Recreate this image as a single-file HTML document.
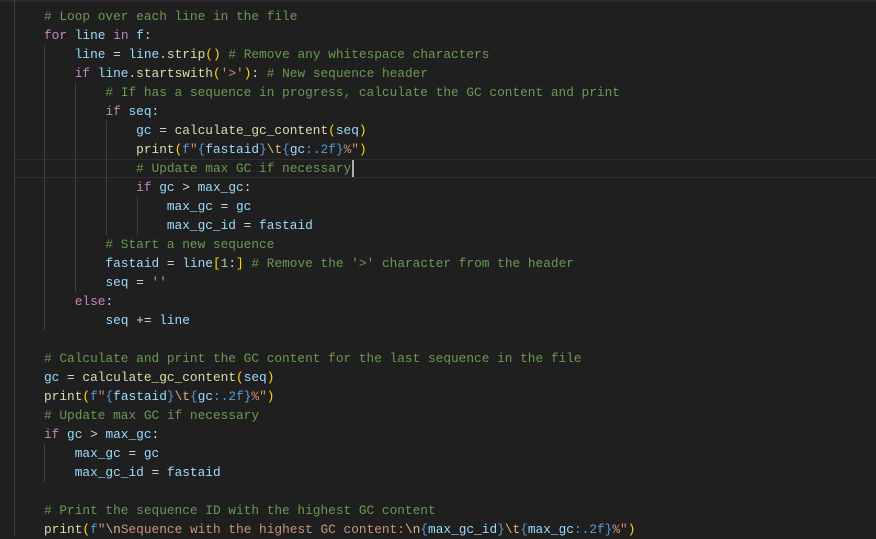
<!DOCTYPE html>
<html><head><meta charset="utf-8"><style>
body{margin:0;width:876px;height:535px;background:#1f1f1f;overflow:hidden;position:relative;font-family:"Liberation Mono",monospace;font-size:12.8px;}
.l{position:absolute;left:44px;white-space:pre;line-height:19px;height:19px;color:#d4d4d4;margin-top:1px}
.g{position:absolute;width:1px;background:#404040}
.c{color:#6a9955}.k{color:#c586c0}.v{color:#9cdcfe}.f{color:#dcdcaa}.y{color:#ffd700}.p{color:#da70d6}.b{color:#179fff}.s{color:#ce9178}.bl{color:#569cd6}.e{color:#d7ba7d}.n{color:#b5cea8}
</style></head><body>
<div style="position:absolute;left:0;top:0;width:876px;height:2px;background:#2b2b2b"></div>
<div class="g" style="left:14px;top:0;height:535px"></div>
<div style="position:absolute;left:15px;top:159px;width:861px;height:19px;border-top:1px solid #2e2e2e;border-bottom:1px solid #2e2e2e;box-sizing:border-box"></div>
<div class="g" style="left:44px;top:45px;height:285px"></div>
<div class="g" style="left:75px;top:83px;height:209px"></div>
<div class="g" style="left:106px;top:121px;height:114px"></div>
<div class="g" style="left:137px;top:197px;height:38px"></div>
<div class="g" style="left:44px;top:444px;height:38px"></div>
<div style="position:absolute;left:352px;top:160px;width:2px;height:17px;background:#aeafad"></div>
<div class="l c" style="top:6px"># Loop over each line in the file</div>
<div class="l" style="top:25px"><span class="k">for</span> <span class="v">line</span> <span class="k">in</span> <span class="v">f</span>:</div>
<div class="l" style="top:44px">    <span class="v">line</span> = <span class="v">line</span>.<span class="f">strip</span><span class="y">()</span> <span class="c"># Remove any whitespace characters</span></div>
<div class="l" style="top:63px">    <span class="k">if</span> <span class="v">line</span>.<span class="f">startswith</span><span class="y">(</span><span class="s">'&gt;'</span><span class="y">)</span>: <span class="c"># New sequence header</span></div>
<div class="l c" style="top:82px">        # If has a sequence in progress, calculate the GC content and print</div>
<div class="l" style="top:101px">        <span class="k">if</span> <span class="v">seq</span>:</div>
<div class="l" style="top:120px">            <span class="v">gc</span> = <span class="f">calculate_gc_content</span><span class="y">(</span><span class="v">seq</span><span class="y">)</span></div>
<div class="l" style="top:139px">            <span class="f">print</span><span class="y">(</span><span class="bl">f</span><span class="s">"</span><span class="bl">{</span><span class="v">fastaid</span><span class="bl">}</span><span class="e">\t</span><span class="bl">{</span><span class="v">gc</span><span class="bl">:.2f}</span><span class="s">%"</span><span class="y">)</span></div>
<div class="l c" style="top:158px">            # Update max GC if necessary</div>
<div class="l" style="top:177px">            <span class="k">if</span> <span class="v">gc</span> &gt; <span class="v">max_gc</span>:</div>
<div class="l" style="top:196px">                <span class="v">max_gc</span> = <span class="v">gc</span></div>
<div class="l" style="top:215px">                <span class="v">max_gc_id</span> = <span class="v">fastaid</span></div>
<div class="l c" style="top:234px">        # Start a new sequence</div>
<div class="l" style="top:253px">        <span class="v">fastaid</span> = <span class="v">line</span><span class="y">[</span><span class="n">1</span>:<span class="y">]</span> <span class="c"># Remove the '&gt;' character from the header</span></div>
<div class="l" style="top:272px">        <span class="v">seq</span> = <span class="s">''</span></div>
<div class="l" style="top:291px">    <span class="k">else</span>:</div>
<div class="l" style="top:310px">        <span class="v">seq</span> += <span class="v">line</span></div>
<div class="l c" style="top:348px"># Calculate and print the GC content for the last sequence in the file</div>
<div class="l" style="top:367px"><span class="v">gc</span> = <span class="f">calculate_gc_content</span><span class="y">(</span><span class="v">seq</span><span class="y">)</span></div>
<div class="l" style="top:386px"><span class="f">print</span><span class="y">(</span><span class="bl">f</span><span class="s">"</span><span class="bl">{</span><span class="v">fastaid</span><span class="bl">}</span><span class="e">\t</span><span class="bl">{</span><span class="v">gc</span><span class="bl">:.2f}</span><span class="s">%"</span><span class="y">)</span></div>
<div class="l c" style="top:405px"># Update max GC if necessary</div>
<div class="l" style="top:424px"><span class="k">if</span> <span class="v">gc</span> &gt; <span class="v">max_gc</span>:</div>
<div class="l" style="top:443px">    <span class="v">max_gc</span> = <span class="v">gc</span></div>
<div class="l" style="top:462px">    <span class="v">max_gc_id</span> = <span class="v">fastaid</span></div>
<div class="l c" style="top:500px"># Print the sequence ID with the highest GC content</div>
<div class="l" style="top:519px"><span class="f">print</span><span class="y">(</span><span class="bl">f</span><span class="s">"</span><span class="e">\n</span><span class="s">Sequence with the highest GC content:</span><span class="e">\n</span><span class="bl">{</span><span class="v">max_gc_id</span><span class="bl">}</span><span class="e">\t</span><span class="bl">{</span><span class="v">max_gc</span><span class="bl">:.2f}</span><span class="s">%"</span><span class="y">)</span></div>
</body></html>
